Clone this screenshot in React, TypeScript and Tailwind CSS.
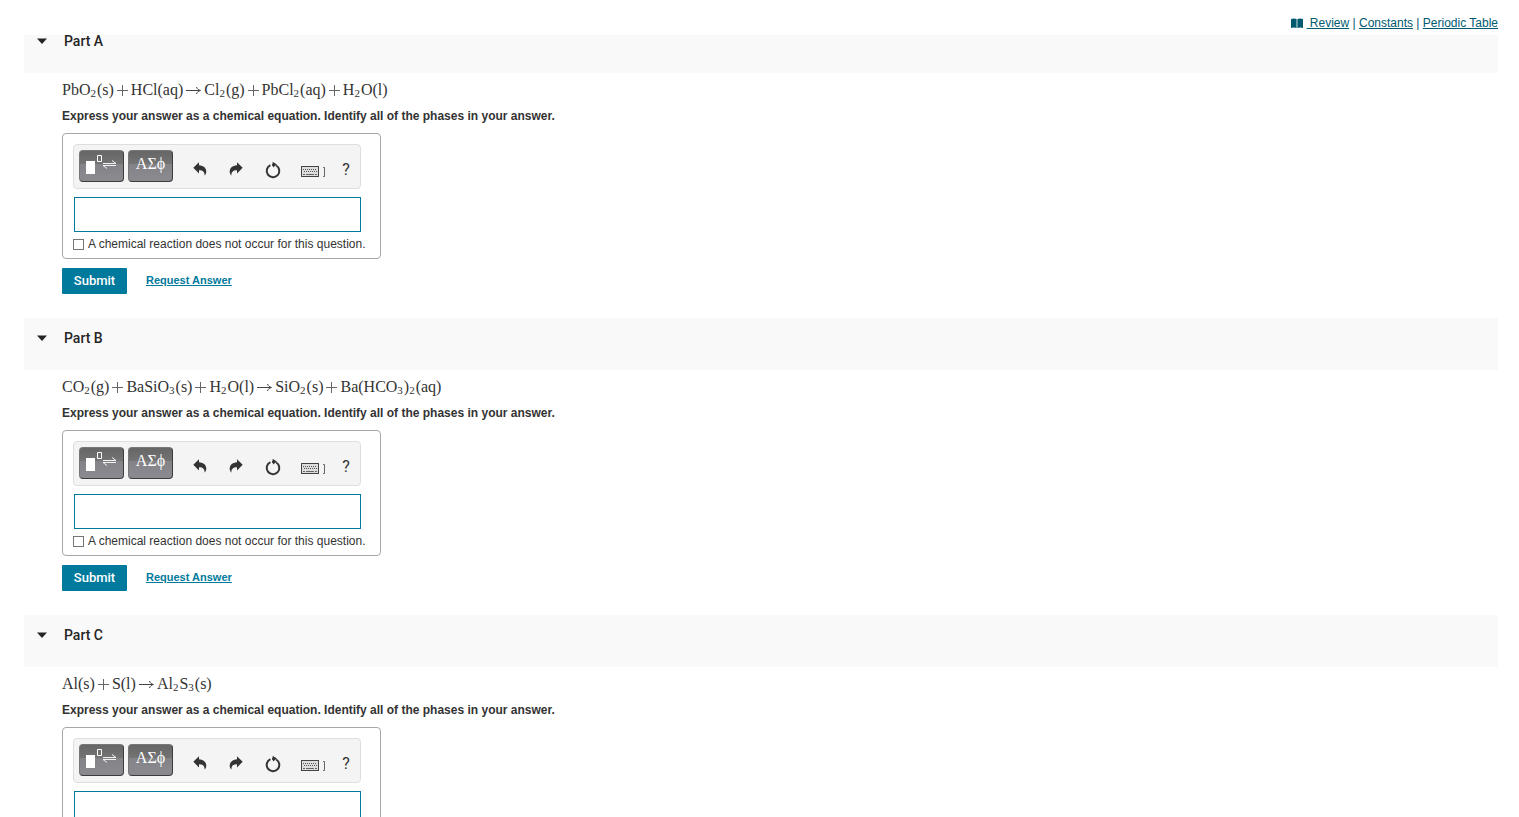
import React from 'react';

type Part = {
  id: string;
  equation: string;
};

const parts: Part[] = [
  { id: 'A', equation: 'PbO2(s) + HCl(aq) → Cl2(g) + PbCl2(aq) + H2O(l)' },
  { id: 'B', equation: 'CO2(g) + BaSiO3(s) + H2O(l) → SiO2(s) + Ba(HCO3)2(aq)' },
  { id: 'C', equation: 'Al(s) + S(l) → Al2S3(s)' },
];

// Digits in a formula are always subscripts here
const Formula = ({ text }: { text: string }) => (
  <>
    {text.split(/(\d)/).map((piece, i) =>
      /\d/.test(piece) ? (
        <sub key={i} className="bottom-0 mr-px align-[-2px] text-[11px] leading-none">{piece}</sub>
      ) : (
        <React.Fragment key={i}>{piece}</React.Fragment>
      )
    )}
  </>
);

const Arrow = () => (
  <svg className="h-[9px] w-[15px]" viewBox="0 0 15 9" fill="none" stroke="#444" strokeWidth="1">
    <path d="M0 4.5H14M10.5 1C11 3 12.5 4 14.5 4.5C12.5 5 11 6 10.5 8" />
  </svg>
);

const Equation = ({ text }: { text: string }) => (
  <p className="flex h-[20px] items-center gap-[3px] font-['Liberation_Serif',serif] text-[16px] leading-[20px] text-[#333]">
    {text.split(' ').map((term, i) => {
      if (term === '→') return <Arrow key={i} />;
      if (term === '+')
        return (
          <svg key={i} className="h-[11px] w-[11px]" viewBox="0 0 11 11" stroke="#666" strokeWidth="1">
            <path d="M0 5.5H11M5.5 0V11" />
          </svg>
        );
      return <span key={i}><Formula text={term} /></span>;
    })}
  </p>
);

const TemplateIcon = () => (
  <svg className="h-[30px] w-[43px] shrink-0" viewBox="0 0 43 30" fill="none">
    <path d="M6 10H15V23H6Z" fill="#fff" />
    <path d="M17.5 4.5H21.5V10.5H17.5Z" stroke="#fff" />
    <path d="M23 12.5H36L32 9.5M36 14.5H23L27 17.5" stroke="#f0f0f0" />
  </svg>
);

const UndoIcon = ({ flip = false }: { flip?: boolean }) => (
  <svg className={flip ? 'h-[14px] w-[14px] -scale-x-100' : 'h-[14px] w-[14px]'} viewBox="0 0 14 14" fill="#333">
    <path d="M0.3 5.7L6 0.2V3.2C10.7 3.4 13.5 6.3 13.3 10C13.2 11.4 12.5 12.8 11.5 13.6C12 10.2 10 8.3 6 8.3V11.4Z" />
  </svg>
);

const ResetIcon = () => (
  <svg className="h-[18px] w-[16px]" viewBox="0 0 16 18" fill="none">
    <path d="M11.2 4.5A6.3 6.3 0 1 1 5.4 4.2" stroke="#333" strokeWidth="2" />
    <path d="M7.6 0.8L12 3.6L8 6.6Z" fill="#333" />
    <path d="M7 3.8H10" stroke="#333" strokeWidth="2" />
  </svg>
);

const KeyboardIcon = () => (
  <svg className="h-[12px] w-[26px]" viewBox="0 0 26 12" fill="none">
    <rect x="0.5" y="0.5" width="17" height="10" fill="#ddd" stroke="#444" />
    <path d="M2 3.5H16" stroke="#555" strokeDasharray="1 1" />
    <path d="M3 5.5H16" stroke="#555" strokeDasharray="1 1" />
    <path d="M2 8.5H4M5 8.5H13M14 8.5H16" stroke="#666" />
    <path d="M22 1.5H23.5V10.5H22" stroke="#666" />
  </svg>
);

const BookIcon = () => (
  <svg className="h-[11px] w-[12px]" viewBox="0 0 12 11" fill="#005a70">
    <path d="M0 1Q3 0 5.6 1V10Q3 9.2 0 10ZM6.4 1Q9 0 12 1V10Q9 9.2 6.4 10Z" />
  </svg>
);

const darkButton =
  'flex h-[32px] w-[45px] items-center justify-center rounded-[4px] border border-[#3c3c3c] border-t-[#777] border-l-[#777] bg-[linear-gradient(#666_0%,#747474_44%,#838388_45%,#8a8a90_100%)] text-white';
const iconButton = 'flex h-[36px] items-center justify-center';

const Toolbar = () => (
  <div className="flex h-[45px] w-[288px] items-start rounded-[4px] border border-[#dedede] bg-[#f4f4f4] p-[5px]">
    <div className="flex gap-1">
      <button type="button" aria-label="Templates" className={darkButton}>
        <TemplateIcon />
      </button>
      <button
        type="button"
        aria-label="Symbols"
        className={`${darkButton} pb-1 font-['Liberation_Serif',serif] text-[16px] leading-none`}
      >
        ΑΣϕ
      </button>
    </div>
    <div className="ml-2 flex pt-px">
      <button type="button" aria-label="Undo" className={`${iconButton} w-[37px]`}><UndoIcon /></button>
      <button type="button" aria-label="Redo" className={`${iconButton} w-[36px]`}><UndoIcon flip /></button>
      <button type="button" aria-label="Reset" className={`${iconButton} w-[37px] pt-px`}><ResetIcon /></button>
      <button type="button" aria-label="Keyboard shortcuts" className={`${iconButton} w-[46px] pt-[6px]`}><KeyboardIcon /></button>
      <button type="button" aria-label="Help" className={`${iconButton} w-[18px] pt-[2px] font-[Roboto,sans-serif] text-[16px] text-[#333]`}>?</button>
    </div>
  </div>
);

const PartSection = ({ id, equation }: Part) => (
  <section className="pb-6">
    <h2 className="flex h-[52px] items-start bg-[#f9f9f9] pt-[10px] font-[Roboto,sans-serif] text-[14px] leading-[20px] font-medium text-[#252525]">
      <button type="button" className="flex items-center">
        <span className="flex w-10 pl-[13px]">
          <svg className="h-[6px] w-[10px]" viewBox="0 0 10 6" fill="#252525">
            <path d="M0 0.5H10L5 6Z" />
          </svg>
        </span>
        Part {id}
      </button>
    </h2>
    <div className="pt-[7px] pl-[38px]">
      <Equation text={equation} />
      <p className="mt-[7px] text-[12px] leading-[18px] font-bold text-[#333]">
        Express your answer as a chemical equation. Identify all of the phases in your answer.
      </p>
      <div className="mt-2 w-[319px] rounded-[4px] border border-[#a7a7a7] p-[10px] pb-[6px]">
        <Toolbar />
        <input
          type="text"
          aria-label={`Answer for part ${id}`}
          className="mt-2 ml-px block h-[35px] w-[287px] border border-[#007a9c] bg-white px-2 outline-none"
        />
        <label className="mt-1 flex h-[16px] items-center gap-1 text-[12px] whitespace-nowrap text-[#333]">
          <input type="checkbox" className="h-[11px] w-[11px] appearance-none border border-[#767676] bg-white checked:bg-[#007a9c]" />
          A chemical reaction does not occur for this question.
        </label>
      </div>
      <div className="mt-[9px] flex items-start gap-[19px]">
        <button type="submit" className="h-[26px] w-[65px] rounded-[1px] bg-[#007a9c] font-[Roboto,sans-serif] text-[13px] leading-[26px] font-medium text-white">
          Submit
        </button>
        <a href="#request" className="text-[11px] leading-[24px] font-bold text-[#007a9c] underline">Request Answer</a>
      </div>
    </div>
  </section>
);

const App: React.FC = () => (
  <div className="h-screen overflow-hidden bg-white font-['Liberation_Sans',Arial,sans-serif]">
    <header className="relative z-10 flex h-[35px] items-center justify-end bg-white pt-[11px] pr-[21px] text-[12px] text-[#005a70]">
      <BookIcon />
      <nav className="ml-1 whitespace-pre">
        <a href="#review" className="underline"> Review</a>
        {' | '}
        <a href="#constants" className="underline">Constants</a>
        {' | '}
        <a href="#periodic-table" className="underline">Periodic Table</a>
      </nav>
    </header>
    {/* the first section is scrolled slightly under the header */}
    <main className="-mt-[14px] pr-[21px] pl-6">
      {parts.map((part) => (
        <PartSection key={part.id} {...part} />
      ))}
    </main>
  </div>
);

export default App;
